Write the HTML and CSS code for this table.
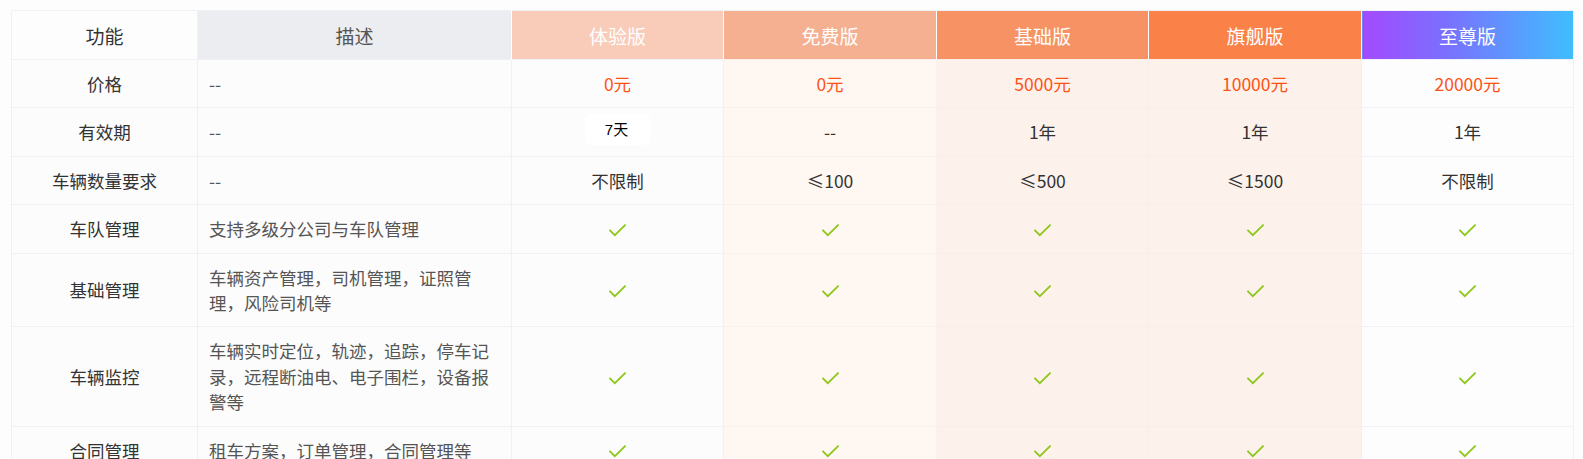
FILE: index.html
```html
<!DOCTYPE html>
<html lang="zh-CN">
<head>
<meta charset="utf-8">
<title>版本对比</title>
<link rel="stylesheet" href="styles.css">
</head>
<body>
<div class="page">
<table class="cmp">
  <colgroup>
    <col class="c-feat"><col class="c-desc"><col class="c-plan"><col class="c-plan2"><col class="c-plan"><col class="c-plan2"><col class="c-plan">
  </colgroup>
  <thead>
    <tr>
      <th class="h-feat">功能</th>
      <th class="h-desc">描述</th>
      <th class="h-p1">体验版</th>
      <th class="h-p2">免费版</th>
      <th class="h-p3">基础版</th>
      <th class="h-p4">旗舰版</th>
      <th class="h-p5">至尊版</th>
    </tr>
  </thead>
  <tbody>
    <tr>
      <td class="feat">价格</td><td class="desc">--</td>
      <td class="p1 price">0元</td><td class="p2 price">0元</td><td class="p3 price">5000元</td><td class="p4 price">10000元</td><td class="p5 price">20000元</td>
    </tr>
    <tr>
      <td class="feat">有效期</td><td class="desc">--</td>
      <td class="p1"><span class="pasted">7天</span></td><td class="p2">--</td><td class="p3">1年</td><td class="p4">1年</td><td class="p5">1年</td>
    </tr>
    <tr>
      <td class="feat">车辆数量要求</td><td class="desc">--</td>
      <td class="p1">不限制</td><td class="p2">≤100</td><td class="p3">≤500</td><td class="p4">≤1500</td><td class="p5">不限制</td>
    </tr>
    <tr>
      <td class="feat">车队管理</td><td class="desc">支持多级分公司与车队管理</td>
      <td class="p1"><svg class="ok" viewBox="0 0 17 13"><path d="M1 6.5 L5.8 11.2 L16 1.2"/></svg></td>
      <td class="p2"><svg class="ok" viewBox="0 0 17 13"><path d="M1 6.5 L5.8 11.2 L16 1.2"/></svg></td>
      <td class="p3"><svg class="ok" viewBox="0 0 17 13"><path d="M1 6.5 L5.8 11.2 L16 1.2"/></svg></td>
      <td class="p4"><svg class="ok" viewBox="0 0 17 13"><path d="M1 6.5 L5.8 11.2 L16 1.2"/></svg></td>
      <td class="p5"><svg class="ok" viewBox="0 0 17 13"><path d="M1 6.5 L5.8 11.2 L16 1.2"/></svg></td>
    </tr>
    <tr>
      <td class="feat">基础管理</td><td class="desc">车辆资产管理，司机管理，证照管理，风险司机等</td>
      <td class="p1"><svg class="ok" viewBox="0 0 17 13"><path d="M1 6.5 L5.8 11.2 L16 1.2"/></svg></td>
      <td class="p2"><svg class="ok" viewBox="0 0 17 13"><path d="M1 6.5 L5.8 11.2 L16 1.2"/></svg></td>
      <td class="p3"><svg class="ok" viewBox="0 0 17 13"><path d="M1 6.5 L5.8 11.2 L16 1.2"/></svg></td>
      <td class="p4"><svg class="ok" viewBox="0 0 17 13"><path d="M1 6.5 L5.8 11.2 L16 1.2"/></svg></td>
      <td class="p5"><svg class="ok" viewBox="0 0 17 13"><path d="M1 6.5 L5.8 11.2 L16 1.2"/></svg></td>
    </tr>
    <tr>
      <td class="feat">车辆监控</td><td class="desc">车辆实时定位，轨迹，追踪，停车记录，远程断油电、电子围栏，设备报警等</td>
      <td class="p1"><svg class="ok" viewBox="0 0 17 13"><path d="M1 6.5 L5.8 11.2 L16 1.2"/></svg></td>
      <td class="p2"><svg class="ok" viewBox="0 0 17 13"><path d="M1 6.5 L5.8 11.2 L16 1.2"/></svg></td>
      <td class="p3"><svg class="ok" viewBox="0 0 17 13"><path d="M1 6.5 L5.8 11.2 L16 1.2"/></svg></td>
      <td class="p4"><svg class="ok" viewBox="0 0 17 13"><path d="M1 6.5 L5.8 11.2 L16 1.2"/></svg></td>
      <td class="p5"><svg class="ok" viewBox="0 0 17 13"><path d="M1 6.5 L5.8 11.2 L16 1.2"/></svg></td>
    </tr>
    <tr>
      <td class="feat">合同管理</td><td class="desc">租车方案，订单管理，合同管理等</td>
      <td class="p1"><svg class="ok" viewBox="0 0 17 13"><path d="M1 6.5 L5.8 11.2 L16 1.2"/></svg></td>
      <td class="p2"><svg class="ok" viewBox="0 0 17 13"><path d="M1 6.5 L5.8 11.2 L16 1.2"/></svg></td>
      <td class="p3"><svg class="ok" viewBox="0 0 17 13"><path d="M1 6.5 L5.8 11.2 L16 1.2"/></svg></td>
      <td class="p4"><svg class="ok" viewBox="0 0 17 13"><path d="M1 6.5 L5.8 11.2 L16 1.2"/></svg></td>
      <td class="p5"><svg class="ok" viewBox="0 0 17 13"><path d="M1 6.5 L5.8 11.2 L16 1.2"/></svg></td>
    </tr>
  </tbody>
</table>
</div>
</body>
</html>
```
FILE: styles.css
```css
html, body {
  margin: 0;
  padding: 0;
  background: #fdfdfd;
}
body {
  font-family: "Noto Sans CJK SC", "Noto Sans", sans-serif;
  color: #333;
}
.page {
  padding: 10px 9px 0 11px;
}
.cmp {
  width: 1563px;
  table-layout: fixed;
  border-collapse: collapse;
  border: 1px solid #f0f1f4;
}
.c-feat { width: 186px; }
.c-desc { width: 314px; }
.c-plan { width: 212px; }
.c-plan2 { width: 213px; }

.cmp th {
  height: 48px;
  padding: 0;
  font-size: 19px;
  font-weight: 400;
  color: #fff;
  border: 1px solid #fff;
  border-top: 1px solid #f0f1f4;
  border-bottom: none;
}
.cmp th.h-feat { background: #fdfdfd; color: #333; border-left-color: #f0f1f4; border-right-color: #f0f1f4; }
.cmp th.h-desc { background: #ecedf0; color: #555; border-left-color: #f0f1f4; }
.cmp th.h-p1 { background: #f8ccb8; }
.cmp th.h-p2 { background: #f5af91; }
.cmp th.h-p3 { background: #f69263; }
.cmp th.h-p4 { background: #fa8148; }
.cmp th.h-p5 {
  background: linear-gradient(90deg, #a34afe 0%, #7a70fe 40%, #5c98fe 70%, #3fbefe 100%);
  border-right-color: #f0f1f4;
}

.cmp td {
  padding: 11px 11px;
  font-size: 17.5px;
  line-height: 25.4px;
  text-align: center;
  vertical-align: middle;
  border: 1px solid #f0f1f4;
  background: #fcfcfc;
}
.cmp td.desc {
  text-align: left;
  color: #555;
  line-break: strict;
}
.cmp td.p2 { background: #fff7f2; border-color: #fbf1ec; }
.cmp td.p3 { background: #fdf1ec; border-color: #faece6; }
.cmp td.p4 { background: #fdf1ec; border-color: #faece6; }
.cmp td.p5 { background: #fdfdfd; }
.cmp td.price { color: #fe5214; }

.pasted {
  display: inline-block;
  background: #fff;
  color: #000;
  font-family: "Liberation Sans", "Noto Sans CJK SC", sans-serif;
  font-size: 15px;
  line-height: 20px;
  padding: 6px 22px 5px 20px;
  border-radius: 6px;
  margin: -5px 0 -2px;
  vertical-align: top;
}

.ok {
  display: inline-block;
  width: 17px;
  height: 13px;
  vertical-align: middle;
  position: relative;
  top: -1px;
}
.ok path {
  fill: none;
  stroke: #8ec81b;
  stroke-width: 1.8;
  stroke-linecap: square;
}
```
